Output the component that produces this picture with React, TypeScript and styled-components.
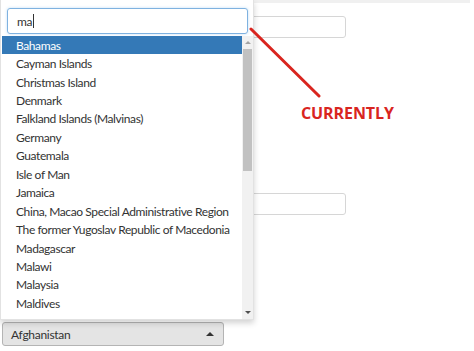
import React from "react";
import styled, { createGlobalStyle } from "styled-components";

const countries = [
  "Bahamas",
  "Cayman Islands",
  "Christmas Island",
  "Denmark",
  "Falkland Islands (Malvinas)",
  "Germany",
  "Guatemala",
  "Isle of Man",
  "Jamaica",
  "China, Macao Special Administrative Region",
  "The former Yugoslav Republic of Macedonia",
  "Madagascar",
  "Malawi",
  "Malaysia",
  "Maldives"
];

const App: React.FC = () => {
  return (
    <Page>
      <GlobalStyle />
      <TopStrip />
      <FormArea>
        <TextInput $top={16} />
        <TextInput $top={158} />
        <SelectToggle>
          <span>Afghanistan</span>
          <Caret $up />
        </SelectToggle>
      </FormArea>

      <Dropdown>
        <SearchBox>
          <SearchInput>
            ma<Cursor />
          </SearchInput>
        </SearchBox>
        <ListArea>
          <List>
            {countries.map((name, i) => (
              <Item key={name} $active={i === 0}>
                {name}
              </Item>
            ))}
          </List>
          <Scrollbar>
            <ScrollArrow>
              <Caret $up $small />
            </ScrollArrow>
            <Track>
              <Thumb />
            </Track>
            <ScrollArrow>
              <Caret $small />
            </ScrollArrow>
          </Scrollbar>
        </ListArea>
      </Dropdown>

      <Pointer width="80" height="80" viewBox="0 0 80 80">
        <line x1="2" y1="2" x2="70" y2="69" stroke="#d9251f" strokeWidth="3" strokeLinecap="round" />
      </Pointer>
      <Note>CURRENTLY</Note>
    </Page>
  );
};

const GlobalStyle = createGlobalStyle`
  html, body {
    margin: 0;
    padding: 0;
    background: #fff;
  }
  body {
    font-family: Lato, "Open Sans", sans-serif;
  }
`;

const Page = styled.div`
  position: relative;
  width: 474px;
  height: 351px;
  overflow: hidden;
  background: #fff;
`;

const TopStrip = styled.div`
  height: 3px;
  margin-left: 250px;
  width: 220px;
  background: #f0f0f0;
`;

const FormArea = styled.div`
  display: flex;
  flex-direction: column;
  align-items: flex-start;
`;

const TextInput = styled.div<{ $top: number }>`
  margin-top: ${({ $top }) => $top - 3}px;
  margin-left: 120px;
  width: 224px;
  height: 20px;
  border: 1px solid #d6d6d6;
  border-radius: 3px;
  background: #fff;
`;

const SelectToggle = styled.div`
  margin-top: 107px;
  margin-left: 2px;
  width: 207px;
  height: 22px;
  padding: 0 5px 0 8px;
  display: flex;
  align-items: center;
  justify-content: space-between;
  background: #e4e4e4;
  border: 1px solid #b4b4b4;
  border-radius: 3px;
  font-size: 12px;
  letter-spacing: -0.3px;
  color: #333;
`;

const Caret = styled.i<{ $up?: boolean; $small?: boolean }>`
  display: block;
  width: 0;
  height: 0;
  margin-right: ${({ $small }) => ($small ? 0 : 4)}px;
  border-left: ${({ $small }) => ($small ? 3 : 4)}px solid transparent;
  border-right: ${({ $small }) => ($small ? 3 : 4)}px solid transparent;
  ${({ $up, $small }) =>
    $up
      ? `border-bottom: ${$small ? 3 : 4}px solid ${$small ? "#a3a3a3" : "#333"};`
      : `border-top: ${$small ? 3 : 4}px solid ${$small ? "#505050" : "#333"};`}
`;

const Dropdown = styled.div`
  position: absolute;
  left: 0;
  top: 0;
  width: 252px;
  height: 319px;
  background: #fff;
  border: 1px solid #e2e2e2;
  border-top: none;
  box-shadow: 0 3px 6px rgba(0, 0, 0, 0.18);
  display: flex;
  flex-direction: column;
`;

const SearchBox = styled.div`
  padding: 8px 5px 2px 6px;
`;

const SearchInput = styled.div`
  height: 24px;
  display: flex;
  align-items: center;
  padding-left: 9px;
  border: 1px solid #7fb2e0;
  border-radius: 3px;
  box-shadow: 0 0 3px rgba(102, 175, 233, 0.4);
  font-size: 12px;
  letter-spacing: -0.3px;
  color: #333;
`;

const Cursor = styled.span`
  display: inline-block;
  width: 1px;
  height: 14px;
  margin-left: 1px;
  background: #333;
`;

const ListArea = styled.div`
  flex: 1;
  display: flex;
  padding-left: 1px;
  min-height: 0;
`;

const List = styled.div`
  flex: 1;
  display: flex;
  flex-direction: column;
  overflow: hidden;
`;

const Item = styled.div<{ $active?: boolean }>`
  height: 18.45px;
  flex-shrink: 0;
  display: flex;
  align-items: center;
  padding-left: 14px;
  font-size: 12px;
  letter-spacing: -0.4px;
  white-space: nowrap;
  color: ${({ $active }) => ($active ? "#fff" : "#333")};
  background: ${({ $active }) => ($active ? "#3479b7" : "transparent")};
`;

const Scrollbar = styled.div`
  width: 11px;
  display: flex;
  flex-direction: column;
  background: #f1f1f1;
`;

const ScrollArrow = styled.div`
  height: 13px;
  display: flex;
  align-items: center;
  justify-content: center;
`;

const Track = styled.div`
  flex: 1;
`;

const Thumb = styled.div`
  height: 122px;
  margin: 0 1px;
  background: #c1c1c1;
`;

const Pointer = styled.svg`
  position: absolute;
  left: 249px;
  top: 27px;
`;

const Note = styled.div`
  position: absolute;
  left: 301px;
  top: 102px;
  font-family: "Open Sans", sans-serif;
  font-size: 16px;
  font-weight: 700;
  color: #d9251f;
  letter-spacing: -0.1px;
`;

export default App;
